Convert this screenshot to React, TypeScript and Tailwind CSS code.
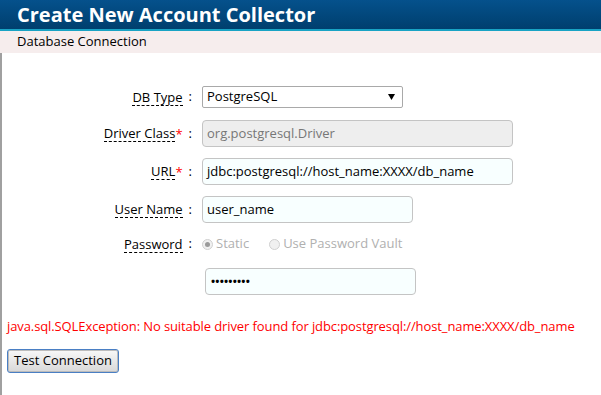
import React from 'react';

function FieldLabel({ text, required }: { text: string; required?: boolean }) {
  return (
    <div className="w-[194px] shrink-0 flex justify-end items-center pr-[2px]">
      <span className="border-b border-dashed border-black leading-[16px]">{text}</span>
      {required && <span className="text-[#ff0000] leading-[16px]">*</span>}
      <span className="ml-[6px]">:</span>
    </div>
  );
}

function Radio({ checked, label }: { checked?: boolean; label: string }) {
  return (
    <label className="flex items-center gap-[3px] text-[#b0b0b0]">
      <span className="w-[11px] h-[11px] rounded-full border border-[#d0d0d0] bg-[#f0f0f0] flex items-center justify-center">
        {checked && <span className="w-[5px] h-[5px] rounded-full bg-[#9a9a9a]" />}
      </span>
      {label}
    </label>
  );
}

export default function App() {
  return (
    <div className="w-[601px] h-[395px] bg-white text-[13px] text-black overflow-hidden flex flex-col" style={{ fontFamily: '"Open Sans", "DejaVu Sans", sans-serif' }}>
      <div className="h-[31px] shrink-0 bg-gradient-to-b from-[#05518c] to-[#003f6e] border-b-2 border-[#19a3c4] flex items-center px-[17px]">
        <h1 className="text-white text-[20px] font-bold leading-none">Create New Account Collector</h1>
      </div>
      <div className="h-[22px] shrink-0 bg-[#f6eded] flex items-center px-[17px]">Database Connection</div>

      <div className="flex-1 border-l-2 border-[#a0a0a0] flex flex-col">
        <div className="flex items-center mt-[33px] -ml-[2px]">
          <FieldLabel text="DB Type" />
          <div className="ml-[8px] w-[201px] h-[22px] border border-[#a9a9a9] rounded-[2px] bg-white flex items-center justify-between pl-[4px] pr-[7px]">
            <span>PostgreSQL</span>
            <svg width="7" height="6" viewBox="0 0 7 6"><path d="M0 0h7L3.5 6z" fill="#000" /></svg>
          </div>
        </div>

        <div className="flex items-center mt-[12px] -ml-[2px]">
          <FieldLabel text="Driver Class" required />
          <div className="ml-[8px] w-[311px] h-[27px] border border-[#c4c4c4] rounded-[4px] bg-[#eeeeee] text-[#777] flex items-center px-[4px]">org.postgresql.Driver</div>
        </div>

        <div className="flex items-center mt-[11px] -ml-[2px]">
          <FieldLabel text="URL" required />
          <div className="ml-[8px] w-[311px] h-[27px] border border-[#c4c4c4] rounded-[4px] bg-[#f8ffff] flex items-center px-[4px]">jdbc:postgresql://host_name:XXXX/db_name</div>
        </div>

        <div className="flex items-center mt-[11px] -ml-[2px]">
          <FieldLabel text="User Name" />
          <div className="ml-[8px] w-[211px] h-[27px] border border-[#c4c4c4] rounded-[4px] bg-[#f8ffff] flex items-center px-[4px]">user_name</div>
        </div>

        <div className="flex items-center mt-[11px] h-[20px] -ml-[2px]">
          <FieldLabel text="Password" />
          <div className="ml-[8px] flex items-center gap-[20px]">
            <Radio checked label="Static" />
            <Radio label="Use Password Vault" />
          </div>
        </div>

        <div className="mt-[14px] ml-[203px] w-[211px] h-[27px] border border-[#c4c4c4] rounded-[4px] bg-[#f8ffff] flex items-center px-[5px] text-[11px] font-bold tracking-[0.2px]">•••••••••</div>

        <div className="mt-[22px] ml-[5px] text-[#ff0000] tracking-[-0.1px]">java.sql.SQLException: No suitable driver found for jdbc:postgresql://host_name:XXXX/db_name</div>

        <div className="mt-[12px] ml-[5px]">
          <button className="w-[112px] h-[24px] border border-[#4a7fc4] rounded-[3px] bg-gradient-to-b from-[#f8f8f8] to-[#d8d8d8] text-[13px] text-black shadow-[inset_0_0_0_1px_#bcbcbc]">Test Connection</button>
        </div>
      </div>
    </div>
  );
}
